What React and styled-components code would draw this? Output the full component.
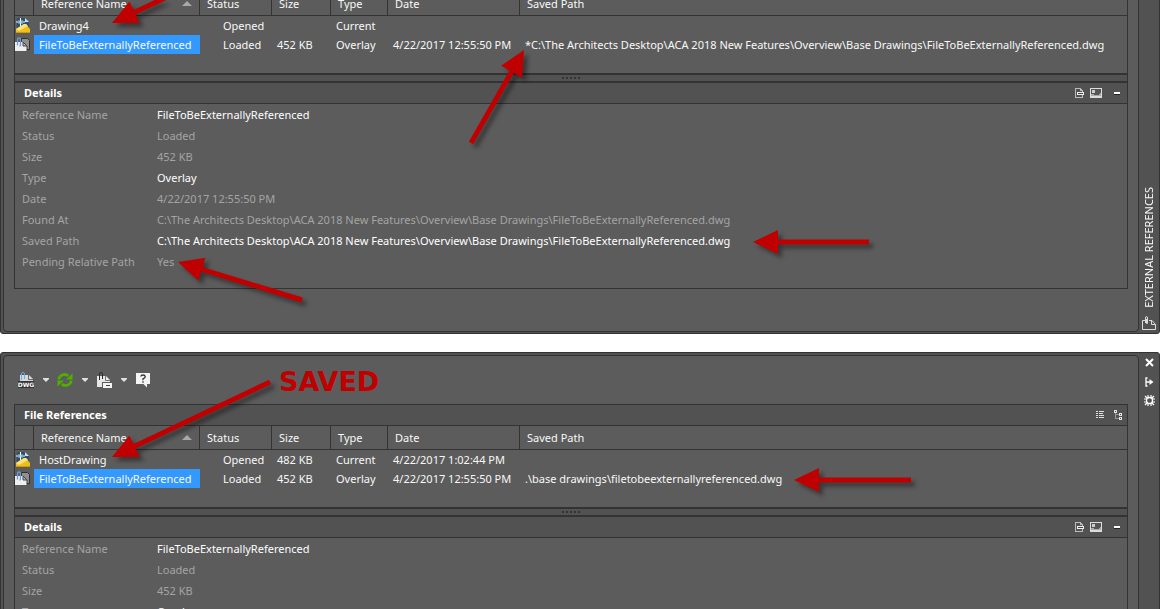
import React from 'react';
import styled, { createGlobalStyle } from 'styled-components';

const GlobalStyle = createGlobalStyle`
  * {
    box-sizing: border-box;
  }

  body {
    margin: 0;
    background: #fff;
    color: #f8f8f8;
    font-family: 'Noto Sans', 'Open Sans', sans-serif;
    font-size: 11px;
    line-height: 16px;
  }
`;

const Page = styled.div`
  position: relative;
  display: flex;
  flex-direction: column;
  gap: 18px;
  height: 100vh;
  overflow: hidden;
`;

/* the upper palette is scrolled, only its lower part stays visible */
const Clip = styled.div`
  display: flex;
  flex-direction: column;
  justify-content: flex-end;
  flex: none;
  height: 334px;
  overflow: hidden;
`;

const Palette = styled.section`
  display: flex;
  flex: none;
  padding: 2px 0 1px 2px;
  background: #525252;
  border: 1px solid #333;
  border-radius: 3px;
`;

const Panel = styled.div`
  flex: 1;
  min-width: 0;
  padding: 0 10px 42px;
  background: #5c5c5c;
  border: 1px solid #333;
  border-radius: 4px;
`;

const Rail = styled.div`
  display: flex;
  flex-direction: column;
  justify-content: space-between;
  align-items: center;
  width: 20px;
  padding: 2px 0;
`;

const RailGroup = styled.div`
  display: flex;
  flex-direction: column;
  align-items: center;
  gap: 8px;
`;

const RailTitle = styled.span`
  writing-mode: vertical-rl;
  transform: rotate(180deg);
  line-height: 18px;
`;

const Toolbar = styled.div`
  display: flex;
  align-items: center;
  height: 48px;
  padding-left: 4px;
`;

const IconButton = styled.button`
  display: flex;
  align-items: center;
  justify-content: center;
  flex: none;
  width: ${props => props.$width || 16}px;
  height: ${props => props.$height || 16}px;
  padding: 0;
  border: 0;
  background: none;
  color: #f0f0f0;
  cursor: pointer;

  svg {
    display: block;
  }
`;

const TitleBar = styled.div`
  display: flex;
  align-items: center;
  justify-content: space-between;
  height: ${props => (props.$joined ? 21 : 22)}px;
  padding-left: 9px;
  background: #525252;
  border: 1px solid #333;
  border-top-width: ${props => (props.$joined ? 0 : 1)}px;

  h2 {
    margin: 0;
    font-size: 11px;
    line-height: 20px;
    font-weight: 700;
    color: #fff;
  }
`;

const TitleActions = styled.div`
  display: flex;
  align-items: center;
  gap: ${props => props.$gap}px;
`;

const TableBox = styled.div`
  min-height: 83px;
  border: 1px solid #333;
  border-top: 0;
  border-bottom-width: 2px;
`;

const Table = styled.table`
  width: 100%;
  table-layout: fixed;
  border-spacing: 0;
`;

const Col = styled.col`
  width: ${props => (props.$width ? `${props.$width}px` : 'auto')};
`;

const Th = styled.th`
  height: 24px;
  padding: 0 7px;
  border-right: 1px solid #333;
  border-bottom: 1px solid #333;
  font-weight: 400;
  text-align: left;
  white-space: nowrap;

  &:last-child {
    border-right: 0;
  }
`;

const Sortable = styled.span`
  display: flex;
  align-items: center;
  justify-content: space-between;
`;

const Td = styled.td`
  height: 19px;
  padding: 0 0 0 ${props => props.$indent ?? 5}px;
  white-space: nowrap;
  background: ${props => (props.$selected ? '#3399ff' : 'transparent')};

  svg {
    display: block;
  }
`;

const Splitter = styled.div`
  display: flex;
  align-items: center;
  justify-content: center;
  gap: 2px;
  height: 8px;
  background: #525252;
  border: 1px solid #333;
  border-top: 0;
  border-bottom-width: 2px;
`;

const Dot = styled.i`
  width: 2px;
  height: 2px;
  background: #333;
`;

const DetailList = styled.dl`
  display: grid;
  grid-template-columns: 135px 1fr;
  grid-auto-rows: 21px;
  align-items: center;
  min-height: 185px;
  align-content: start;
  margin: 0;
  padding-left: 7px;
  border: 1px solid #333;
  border-top: 0;
  white-space: nowrap;
`;

const Term = styled.dt`
  color: #a4a4a4;
`;

const Value = styled.dd`
  margin: 0;
  color: ${props => (props.$editable ? '#fff' : '#a4a4a4')};
`;

/* red call-outs drawn over the palettes */
const Annotations = styled.svg`
  position: absolute;
  top: 0;
  left: 0;
  pointer-events: none;
  filter: drop-shadow(4px 4px 2px rgba(0, 0, 0, 0.4));
`;

const Note = styled.strong`
  position: absolute;
  top: 366px;
  left: 279px;
  font-family: 'DejaVu Sans', sans-serif;
  font-size: 27px;
  line-height: 32px;
  color: #c00000;
`;

const DwgIcon = () => (
  <svg width="16" height="16" viewBox="0 0 16 16">
    <path d="M2 3h9l4 4v2H2z" fill="#d8d8d8" />
    <path d="M10.5 3v4.500H15" fill="none" stroke="#666" />
    <path d="M3.500 8V1.500q0-1 1.500-1t1.500 1V7" fill="none" stroke="#6ea8ea" />
    <path d="M0 9h16v7H0z" fill="#333" />
    <text x="8" y="15" textAnchor="middle" fontFamily="DejaVu Sans" fontWeight="700" fontSize="6" fill="#fff">DWG</text>
  </svg>
);

const RefreshIcon = () => (
  <svg width="17" height="16" viewBox="0 0 17 16">
    <path d="M2 7.5A6 5.5 0 0 1 12 3.6" fill="none" stroke="#4fae00" strokeWidth="3" />
    <path d="M16.5 1v6.5H9.5z" fill="#4fae00" />
    <path d="M15 8.5A6 5.5 0 0 1 5 12.4" fill="none" stroke="#4fae00" strokeWidth="3" />
    <path d="M.5 15V8.5h7z" fill="#4fae00" />
  </svg>
);

const PathIcon = () => (
  <svg width="16" height="16" viewBox="0 0 16 16">
    <path d="M1 4h9l4 4v2H6v5H1z" fill="#e8e8e8" />
    <path d="M9.500 4v4.500H14" fill="none" stroke="#777" />
    <path d="M3.500 8V1.500q0-1 1.500-1t1.500 1V7" fill="none" stroke="#2c2c2c" />
    <path d="M7 11h9v5H7z" fill="#f4f4f4" />
    <path d="M10 13.500h4" stroke="#444" />
  </svg>
);

const HelpIcon = () => (
  <svg width="16" height="16" viewBox="0 0 16 16">
    <path d="M1 1h14v11h-3v3.500L8.500 12H1z" fill="#f4f4f4" />
    <path d="M5.800 4.500Q6 3 8 3t2.200 1.700Q10.200 6 8 6.800v1.400M8 9.200v1.500" fill="none" stroke="#333" strokeWidth="1.300" />
  </svg>
);

const DropIcon = () => (
  <svg width="6" height="4" viewBox="0 0 6 4">
    <path d="M0 0h6v1L3 4 0 1z" fill="#e0e0e0" />
  </svg>
);

const SortIcon = () => (
  <svg width="10" height="5" viewBox="0 0 10 5">
    <path d="M0 5L5 0l5 5z" fill="#a8a8a8" />
  </svg>
);

const HostIcon = () => (
  <svg width="16" height="17" viewBox="0 0 16 17">
    <path d="M2 1h8l4 4v6H2z" fill="#28506f" />
    <path d="M10 1v4h4z" fill="#d5dde4" />
    <path d="M5.500 1v9M1 5h9" stroke="#f2f8fd" />
    <path d="M3.500 3l4 4M7.500 3l-4 4" stroke="#a9cbe6" />
    <path d="M1 12l8-5h2l4 5v4H1z" fill="#f3bd17" />
    <path d="M1 12l8-5h2l2 2-9 5z" fill="#ffe27a" />
    <path d="M1 15.500h14" stroke="#d49c00" />
  </svg>
);

const XrefIcon = () => (
  <svg width="16" height="15" viewBox="0 0 16 15">
    <path d="M6.500 1.500h6l2 2v9h-8z" fill="#8f8f8f" stroke="#303030" />
    <path d="M0 5h8l4 4v5H0z" fill="#efefef" />
    <path d="M8 5v4h4z" fill="#b4b4b4" />
    <path d="M8 5v4h4M8 5l4 4v5" fill="none" stroke="#444" />
    <path d="M2.500 8.500V3q0-2 1.500-2t1.500 2v5q0 1-1 1" fill="none" stroke="#6c9bd0" strokeWidth="1.300" />
  </svg>
);

const ListIcon = () => (
  <svg width="9" height="8" viewBox="0 0 9 8" shapeRendering="crispEdges">
    <path d="M0 .5h2M3 .5h5M0 2.500h2M3 2.500h4M0 4.500h2M3 4.500h5M0 6.500h2M3 6.500h5" stroke="#ddd" />
  </svg>
);

const TreeIcon = () => (
  <svg width="9" height="10" viewBox="0 0 9 10" shapeRendering="crispEdges">
    <path d="M1.500 3v5.500H5M1.500 4.500H5" fill="none" stroke="#999" />
    <path d="M.5.500h2v2h-2zM5.500 3.500h2v2h-2zM5.500 7.500h2v2h-2z" fill="none" stroke="#e4e4e4" />
  </svg>
);

const DetailsIcon = () => (
  <svg width="9" height="10" viewBox="0 0 9 10" shapeRendering="crispEdges">
    <path d="M7.500 4V2.500L5.500.500h-5v9h7V7" fill="none" stroke="#bbb" />
    <path d="M5.500.500v2h2" fill="none" stroke="#bbb" />
    <path d="M2.500 4.500h6v2h-6z" fill="#444" stroke="#f0f0f0" />
  </svg>
);

const PreviewIcon = () => (
  <svg width="12" height="10" viewBox="0 0 12 10" shapeRendering="crispEdges">
    <path d="M.5.500h11v9H.500z" fill="#555" stroke="#ddd" />
    <path d="M2 2h3v3H2z" fill="#ccc" />
    <path d="M1 6h2l2 1h3l3-2v4H1z" fill="#aaa" />
    <path d="M1 8h10v1H1z" fill="#ddd" />
  </svg>
);

const MinusIcon = () => (
  <svg width="6" height="3" viewBox="0 0 6 3" shapeRendering="crispEdges">
    <path d="M0 0h6v2H0z" fill="#fff" />
    <path d="M0 2h6v1H0z" fill="#222" />
  </svg>
);

const CloseIcon = () => (
  <svg width="9" height="9" viewBox="0 0 9 9">
    <path d="M1 1l7 7M8 1L1 8" stroke="#fff" strokeWidth="2" />
  </svg>
);

const AutoHideIcon = () => (
  <svg width="9" height="10" viewBox="0 0 9 10">
    <path d="M2.500 1H1v8h1.500" fill="none" stroke="#fff" strokeWidth="1.300" />
    <path d="M1 5h4" stroke="#fff" strokeWidth="1.500" />
    <path d="M4.500 2L8.500 5l-4 3z" fill="#fff" />
  </svg>
);

const GearIcon = () => (
  <svg width="11" height="11" viewBox="0 0 11 11">
    <circle cx="5.500" cy="5.500" r="3" fill="none" stroke="#fff" strokeWidth="1.300" />
    <path d="M4 0v3M7 0v3M4 8v3M7 8v3M0 4h3M0 7h3M8 4h3M8 7h3M1 1l2 2M8 8l2 2M10 1L8 3M3 8l-2 2" stroke="#fff" strokeWidth="1.200" />
  </svg>
);

const PaletteIcon = () => (
  <svg width="14" height="14" viewBox="0 0 14 14">
    <path d="M3 4.500H.500v9h13v-5L10 4.500H7" fill="none" stroke="#ddd" />
    <path d="M9.500 5v3.500h4" fill="none" stroke="#ddd" />
    <path d="M3.500 7V2q0-1.500 1-1.500t1 1.500v5.500q-.5 1-1 0V3" fill="none" stroke="#ddd" />
  </svg>
);

const tools = [
  { label: 'Attach DWG', icon: DwgIcon, menu: true },
  { label: 'Refresh', icon: RefreshIcon, menu: true },
  { label: 'Change Path', icon: PathIcon, menu: true },
  { label: 'Help', icon: HelpIcon },
];

const columns = [
  { title: '', width: 19 },
  { title: 'Reference Name', width: 166, sorted: true },
  { title: 'Status', width: 72 },
  { title: 'Size', width: 59 },
  { title: 'Type', width: 57 },
  { title: 'Date', width: 132 },
  { title: 'Saved Path' },
];

const fullPath =
  'C:\\The Architects Desktop\\ACA 2018 New Features\\Overview\\Base Drawings\\FileToBeExternallyReferenced.dwg';

const unsavedFiles = [
  { name: 'Drawing4', status: 'Opened', type: 'Current', host: true },
  {
    name: 'FileToBeExternallyReferenced',
    status: 'Loaded',
    size: '452 KB',
    type: 'Overlay',
    date: '4/22/2017 12:55:50 PM',
    path: `*${fullPath}`,
  },
];

const savedFiles = [
  { name: 'HostDrawing', status: 'Opened', size: '482 KB', type: 'Current', date: '4/22/2017 1:02:44 PM', host: true },
  {
    name: 'FileToBeExternallyReferenced',
    status: 'Loaded',
    size: '452 KB',
    type: 'Overlay',
    date: '4/22/2017 12:55:50 PM',
    path: '.\\base drawings\\filetobeexternallyreferenced.dwg',
  },
];

const details = [
  { term: 'Reference Name', value: 'FileToBeExternallyReferenced', editable: true },
  { term: 'Status', value: 'Loaded' },
  { term: 'Size', value: '452 KB' },
  { term: 'Type', value: 'Overlay', editable: true },
  { term: 'Date', value: '4/22/2017 12:55:50 PM' },
  { term: 'Found At', value: fullPath },
  { term: 'Saved Path', value: fullPath, editable: true },
  { term: 'Pending Relative Path', value: 'Yes' },
];

const arrows = [
  { tip: [112, 23], tail: [270, -52] },
  { tip: [524, 50], tail: [471, 143] },
  { tip: [753, 242], tail: [869, 242] },
  { tip: [178, 262], tail: [302, 300] },
  { tip: [112, 457], tail: [270, 382] },
  { tip: [794, 480], tail: [911, 480] },
];

const Arrow = ({ tip, tail }) => {
  const dx = tail[0] - tip[0];
  const dy = tail[1] - tip[1];
  const length = Math.hypot(dx, dy);
  const angle = (Math.atan2(dy, dx) * 180) / Math.PI;

  return (
    <path
      transform={`translate(${tip[0]} ${tip[1]}) rotate(${angle})`}
      d={`M0 0L25 -12V-2.500H${length}V2.500H25V12z`}
      fill="#c00000"
    />
  );
};

const FileTable = ({ files }) => (
  <TableBox>
    <Table>
      <colgroup>
        {columns.map(column => (
          <Col key={column.title} $width={column.width} />
        ))}
      </colgroup>
      <thead>
        <tr>
          {columns.map(column => (
            <Th key={column.title} scope="col">
              {column.sorted ? (
                <Sortable>
                  {column.title}
                  <SortIcon />
                </Sortable>
              ) : (
                column.title
              )}
            </Th>
          ))}
        </tr>
      </thead>
      <tbody>
        {files.map(file => (
          <tr key={file.name}>
            <Td $indent={0}>{file.host ? <HostIcon /> : <XrefIcon />}</Td>
            <Td $selected={!file.host}>{file.name}</Td>
            <Td $indent={23}>{file.status}</Td>
            <Td>{file.size}</Td>
            <Td>{file.type}</Td>
            <Td>{file.date}</Td>
            <Td>{file.path}</Td>
          </tr>
        ))}
      </tbody>
    </Table>
  </TableBox>
);

const Details = ({ rows }) => (
  <>
    <Splitter>
      {[0, 1, 2, 3, 4].map(dot => (
        <Dot key={dot} />
      ))}
    </Splitter>
    <TitleBar $joined>
      <h2>Details</h2>
      <TitleActions $gap={4}>
        <IconButton $width={12} aria-label="Details">
          <DetailsIcon />
        </IconButton>
        <IconButton $width={14} aria-label="Preview">
          <PreviewIcon />
        </IconButton>
        <IconButton $width={20} aria-label="Collapse">
          <MinusIcon />
        </IconButton>
      </TitleActions>
    </TitleBar>
    <DetailList>
      {rows.map(row => (
        <React.Fragment key={row.term}>
          <Term>{row.term}</Term>
          <Value $editable={row.editable}>{row.value}</Value>
        </React.Fragment>
      ))}
    </DetailList>
  </>
);

const App = () => {
  return (
    <>
      <GlobalStyle />
      <Page>
        <Clip>
          <Palette>
            <Panel>
              <FileTable files={unsavedFiles} />
              <Details rows={details} />
            </Panel>
            <Rail>
              <span />
              <RailGroup>
                <RailTitle>EXTERNAL REFERENCES</RailTitle>
                <PaletteIcon />
              </RailGroup>
            </Rail>
          </Palette>
        </Clip>

        <Palette>
          <Panel>
            <Toolbar>
              {tools.map(tool => (
                <React.Fragment key={tool.label}>
                  <IconButton aria-label={tool.label}>
                    <tool.icon />
                  </IconButton>
                  {tool.menu && (
                    <IconButton $width={23} aria-label={`${tool.label} menu`}>
                      <DropIcon />
                    </IconButton>
                  )}
                </React.Fragment>
              ))}
            </Toolbar>
            <TitleBar>
              <h2>File References</h2>
              <TitleActions $gap={0}>
                <IconButton $width={18} aria-label="List View">
                  <ListIcon />
                </IconButton>
                <IconButton $width={18} aria-label="Tree View">
                  <TreeIcon />
                </IconButton>
              </TitleActions>
            </TitleBar>
            <FileTable files={savedFiles} />
            <Details rows={details.slice(0, 4)} />
          </Panel>
          <Rail>
            <RailGroup>
              <IconButton $height={11} aria-label="Close">
                <CloseIcon />
              </IconButton>
              <IconButton $height={11} aria-label="Auto-hide">
                <AutoHideIcon />
              </IconButton>
              <IconButton $height={11} aria-label="Properties">
                <GearIcon />
              </IconButton>
            </RailGroup>
          </Rail>
        </Palette>

        <Annotations width="1160" height="609" viewBox="0 0 1160 609" aria-hidden="true">
          {arrows.map((arrow, index) => (
            <Arrow key={index} tip={arrow.tip} tail={arrow.tail} />
          ))}
        </Annotations>
        <Note>SAVED</Note>
      </Page>
    </>
  );
};

export default App;
